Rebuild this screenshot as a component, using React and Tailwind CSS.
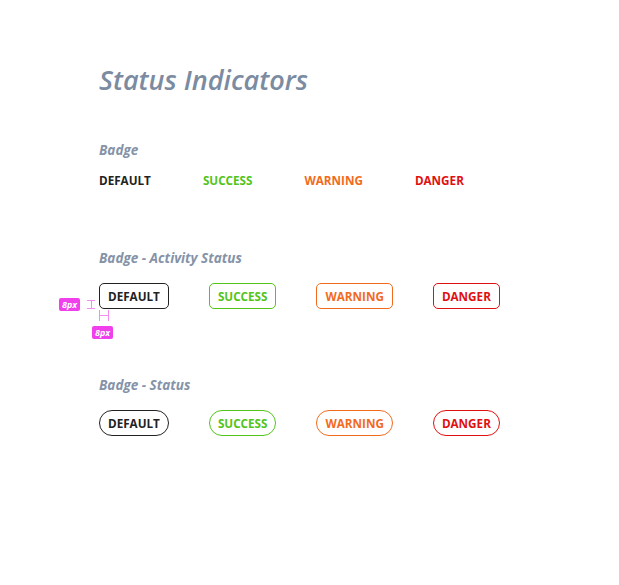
import React from "react";

const items = [
  { label: "DEFAULT", text: "text-[#222222]", border: "border-[#222222]" },
  { label: "SUCCESS", text: "text-[#52c41a]", border: "border-[#52c41a]" },
  { label: "WARNING", text: "text-[#f26b1d]", border: "border-[#f26b1d]" },
  { label: "DANGER", text: "text-[#e01010]", border: "border-[#e01010]" },
];

function Label({ children }) {
  return (
    <div className="text-[13.5px] leading-[18px] font-bold italic text-[#8593a8]">{children}</div>
  );
}

export default function App() {
  return (
    <div
      className="w-[619px] h-[585px] bg-white pl-[99px] pt-[62px]"
      style={{ fontFamily: '"Open Sans", sans-serif' }}
    >
      <h1 className="text-[27px] leading-[36px] font-semibold italic text-[#7b8ba1]">Status Indicators</h1>

      <div className="mt-[43px]">
        <Label>Badge</Label>
        <div className="mt-[13px] flex gap-[52px]">
          {items.map((it) => (
            <span key={it.label} className={`text-[11.7px] leading-[16px] font-bold ${it.text}`}>
              {it.label}
            </span>
          ))}
        </div>
      </div>

      <div className="mt-[61px]">
        <Label>Badge - Activity Status</Label>
        <div className="relative mt-[16px] flex gap-[40px]">
          {items.map((it) => (
            <span
              key={it.label}
              className={`border ${it.border} ${it.text} rounded-[5px] px-[8px] py-[4px] text-[11.7px] leading-[16px] font-bold`}
            >
              {it.label}
            </span>
          ))}
          <div className="absolute left-[-40px] top-[15px] h-[13px] px-[3px] rounded-[2px] bg-[#f040ec] text-white text-[9px] leading-[13px] font-bold italic">
            8px
          </div>
          <div className="absolute left-[-12px] top-[17px] w-[8px] h-[9px] border-y border-[#f58cf0] flex justify-center">
            <div className="w-px h-full bg-[#f58cf0]" />
          </div>
          <div className="absolute left-0 top-[27px] w-[10px] h-[11px] border-x border-[#f58cf0] flex items-center">
            <div className="w-full h-px bg-[#f58cf0]" />
          </div>
          <div className="absolute left-[-7px] top-[43px] h-[13px] px-[3px] rounded-[2px] bg-[#f040ec] text-white text-[9px] leading-[13px] font-bold italic">
            8px
          </div>
        </div>
      </div>

      <div className="mt-[67px]">
        <Label>Badge - Status</Label>
        <div className="mt-[16px] flex gap-[40px]">
          {items.map((it) => (
            <span
              key={it.label}
              className={`border ${it.border} ${it.text} rounded-full px-[8px] py-[4px] text-[11.7px] leading-[16px] font-bold`}
            >
              {it.label}
            </span>
          ))}
        </div>
      </div>
    </div>
  );
}
